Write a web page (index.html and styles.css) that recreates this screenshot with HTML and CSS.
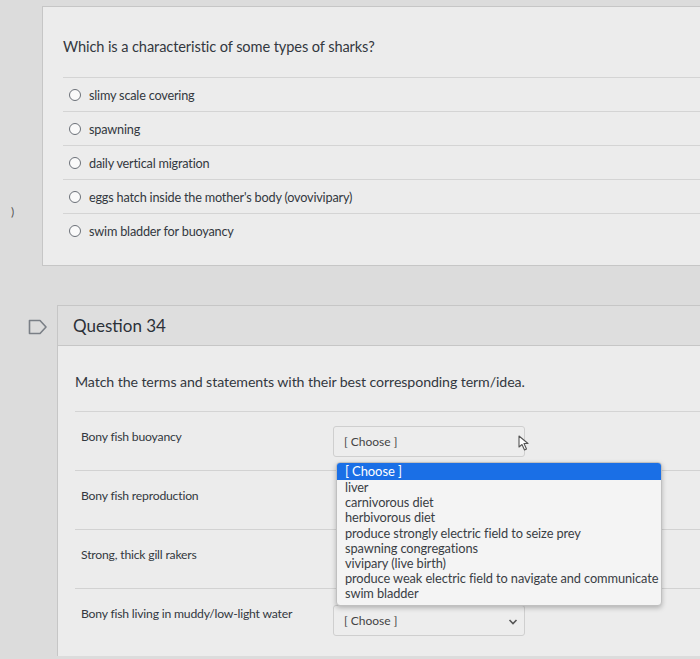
FILE: index.html
```html
<!DOCTYPE html>
<html>
<head>
<meta charset="utf-8">
<link rel="stylesheet" href="styles.css">
</head>
<body>
<div class="page">
  <span class="stray">)</span>
  <div class="card card1">
    <div class="qtext">Which is a characteristic of some types of sharks?</div>
    <ul class="options">
      <li><span class="radio"></span>slimy scale covering</li>
      <li><span class="radio"></span>spawning</li>
      <li><span class="radio"></span>daily vertical migration</li>
      <li><span class="radio"></span>eggs hatch inside the mother's body (ovovivipary)</li>
      <li><span class="radio"></span>swim bladder for buoyancy</li>
    </ul>
  </div>

  <div class="q34">
    <svg class="flag" width="20" height="16" viewBox="0 0 20 16"><path d="M1.5 1.5 H12 L18 8 L12 14.5 H1.5 Z" fill="none" stroke="#7a7f86" stroke-width="1.6" stroke-linejoin="round"/></svg>
    <div class="card card2">
      <div class="head">Question 34</div>
      <div class="body">
        <div class="prompt">Match the terms and statements with their best corresponding term/idea.</div>
        <div class="rows">
          <div class="row">
            <div class="term">Bony fish buoyancy</div>
            <div class="selwrap">
              <div class="select">[ Choose ]</div>
              <svg class="cursor" width="16" height="18" viewBox="0 0 16 18"><path d="M2 2 L2 13 L5 10.5 L7.5 16 L9.5 15 L7 9.5 L11 9.5 Z" fill="#fff" stroke="#555" stroke-width="1.1" stroke-linejoin="round"/></svg>
              <ul class="dropdown">
                <li class="sel">[ Choose ]</li>
                <li>liver</li>
                <li>carnivorous diet</li>
                <li>herbivorous diet</li>
                <li>produce strongly electric field to seize prey</li>
                <li>spawning congregations</li>
                <li>vivipary (live birth)</li>
                <li>produce weak electric field to navigate and communicate</li>
                <li>swim bladder</li>
              </ul>
            </div>
          </div>
          <div class="row">
            <div class="term">Bony fish reproduction</div>
          </div>
          <div class="row">
            <div class="term">Strong, thick gill rakers</div>
          </div>
          <div class="row last">
            <div class="term">Bony fish living in muddy/low-light water</div>
            <div class="selwrap">
              <div class="select">[ Choose ]<svg class="chev" width="10" height="6" viewBox="0 0 10 6"><path d="M1.5 1 L5 4.5 L8.5 1" fill="none" stroke="#555" stroke-width="1.6"/></svg></div>
            </div>
          </div>
        </div>
      </div>
    </div>
  </div>
</div>
</body>
</html>
```
FILE: styles.css
```css
html, body {
  margin: 0;
  padding: 0;
}
body {
  background: #dcdcdc;
  font-family: Lato, "Liberation Sans", sans-serif;
  color: #333840;
  overflow: hidden;
  width: 700px;
  height: 659px;
}
.page {
  position: relative;
  padding-top: 6px;
}
.stray {
  position: absolute;
  left: 11px;
  top: 204px;
  font-size: 12px;
  color: #555;
}
.card {
  background: #ececec;
  border: 1px solid #c6c6c6;
  border-right: none;
}
.card1 {
  margin-left: 42px;
  height: 258px;
  padding-left: 20px;
}
.qtext {
  font-size: 14.6px;
  padding-top: 31px;
  height: 39px;
  border-bottom: 1px solid #d4d4d4;
  letter-spacing: -0.1px;
}
.options {
  list-style: none;
  margin: 0;
  padding: 0;
}
.options li {
  height: 32px;
  border-bottom: 1px solid #d4d4d4;
  display: flex;
  align-items: center;
  padding-left: 6px;
  font-size: 12.7px;
  letter-spacing: -0.2px;
  padding-top: 1px;
}
.options li:last-child {
  border-bottom: none;
}
.radio {
  width: 10px;
  height: 10px;
  border: 1.5px solid #6b7078;
  border-radius: 50%;
  background: #fafafa;
  margin-right: 8px;
  flex: none;
}
.q34 {
  position: relative;
  margin-top: 39px;
  padding-left: 57px;
}
.flag {
  position: absolute;
  left: 28px;
  top: 14px;
}
.card2 {
  height: 350px;
  border-bottom: none;
}
.head {
  height: 39px;
  background: #dedede;
  border-bottom: 1px solid #c6c6c6;
  font-size: 17px;
  display: flex;
  align-items: center;
  padding-left: 15px;
  color: #2c3138;
}
.body {
  padding-left: 17px;
}
.prompt {
  font-size: 14.2px;
  padding-top: 27px;
  height: 38px;
  border-bottom: 1px solid #d4d4d4;
  letter-spacing: -0.1px;
}
.row {
  position: relative;
  height: 58px;
  border-bottom: 1px solid #d2d2d2;
  display: flex;
  align-items: flex-start;
}
.row.last {
  border-bottom: none;
}
.term {
  width: 252px;
  padding-left: 6px;
  padding-top: 17px;
  font-size: 12.2px;
  letter-spacing: -0.2px;
}
.selwrap {
  position: relative;
  padding-top: 14px;
}
.row.last .selwrap {
  padding-top: 16px;
}
.select {
  width: 192px;
  height: 31px;
  box-sizing: border-box;
  border: 1px solid #cfcfcf;
  border-radius: 3px;
  background: #ededed;
  font-size: 12px;
  display: flex;
  align-items: center;
  justify-content: space-between;
  padding: 0 6px 0 10px;
  color: #444;
}
.chev {
  margin-top: 2px;
}
.cursor {
  position: absolute;
  left: 184px;
  top: 22px;
}
.dropdown {
  position: absolute;
  z-index: 5;
  left: 3px;
  top: 50px;
  width: 324px;
  margin: 0;
  padding: 0 0 3px;
  list-style: none;
  background: #f4f4f4;
  border: 1px solid #c0c0c0;
  border-radius: 4px;
  box-shadow: 0 2px 5px rgba(0,0,0,0.25);
  font-size: 12.8px;
  overflow: hidden;
}
.dropdown li {
  height: 15.2px;
  line-height: 15px;
  padding-left: 8px;
  white-space: nowrap;
  color: #3a3e44;
  letter-spacing: -0.1px;
}
.dropdown li.sel {
  background: #1a6fe6;
  color: #fff;
  height: 17px;
  line-height: 17px;
  font-size: 13px;
}
```
